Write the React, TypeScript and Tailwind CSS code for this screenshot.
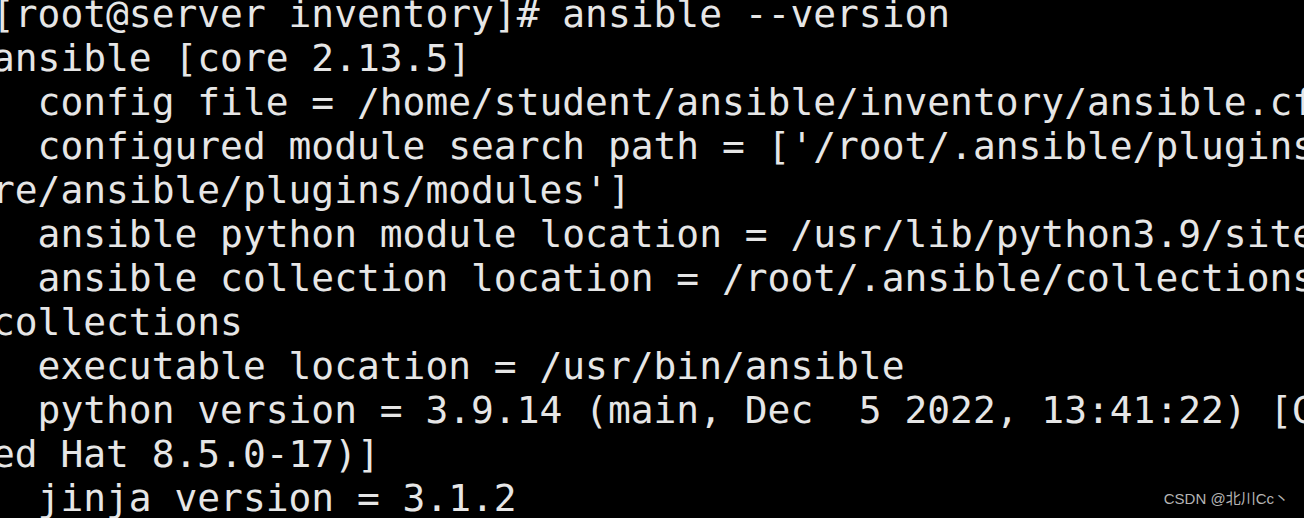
import React from "react";

const lines = [
  "[root@server inventory]# ansible --version",
  "ansible [core 2.13.5]",
  "  config file = /home/student/ansible/inventory/ansible.cfg",
  "  configured module search path = ['/root/.ansible/plugins/modules', '/usr/sha",
  "re/ansible/plugins/modules']",
  "  ansible python module location = /usr/lib/python3.9/site-packages/ansible",
  "  ansible collection location = /root/.ansible/collections:/usr/share/ansible/",
  "collections",
  "  executable location = /usr/bin/ansible",
  "  python version = 3.9.14 (main, Dec  5 2022, 13:41:22) [GCC 8.5.0 20210514 (R",
  "ed Hat 8.5.0-17)]",
  "  jinja version = 3.1.2",
];

export default function App() {
  return (
    <div className="relative w-[1304px] h-[518px] overflow-hidden bg-black">
      <div
        className="ml-[-8px] mt-[-8px] text-[37.9px] leading-[44px] text-[#e6e6e6] whitespace-pre"
        style={{ fontFamily: '"DejaVu Sans Mono", monospace' }}
      >
        {lines.map((l, i) => (
          <div key={i} className="h-[44px]">
            {l}
          </div>
        ))}
      </div>
      <div
        className="absolute right-[15px] bottom-[11px] text-[15px] leading-[16px] text-[#b4b4b4]"
        style={{ fontFamily: '"Liberation Sans", "Noto Sans CJK SC", sans-serif' }}
      >
        CSDN @北川Cc丶
      </div>
    </div>
  );
}
